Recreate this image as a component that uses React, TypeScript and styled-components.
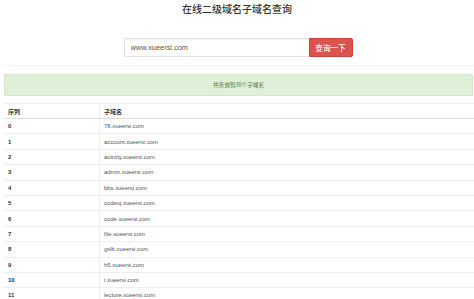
import React from "react";
import styled, { createGlobalStyle } from "styled-components";

const Global = createGlobalStyle`
  html, body { margin: 0; padding: 0; background: #fff; overflow: hidden; }
  body { font-family: "Liberation Sans", "Noto Sans CJK SC", sans-serif; color: #333; }
`;

const Page = styled.div`
  width: 474px;
  display: flex;
  flex-direction: column;
`;

const Title = styled.h1`
  margin: 0;
  padding-top: 3px;
  height: 14px;
  font-family: "Noto Sans CJK SC", sans-serif;
  font-size: 10px;
  line-height: 12px;
  font-weight: 500;
  text-align: center;
  color: #333;
`;

const Form = styled.form`
  display: flex;
  justify-content: center;
  margin: 21px 0 0 2px;
  padding-bottom: 8px;
  border-bottom: 1px solid #f4f4f4;
`;

const Input = styled.input`
  box-sizing: border-box;
  width: 185px;
  height: 19px;
  padding: 0 6px;
  border: 1px solid #e2e2e2;
  border-right: none;
  border-radius: 2px 0 0 2px;
  font-family: "Liberation Sans", sans-serif;
  font-size: 7.4px;
  color: #555;
  outline: none;
  box-shadow: inset 0 1px 1px rgba(0, 0, 0, 0.04);
`;

const Button = styled.button`
  box-sizing: border-box;
  width: 44px;
  height: 19px;
  border: 1px solid #d43f3a;
  border-radius: 0 2px 2px 0;
  background: #d9534f;
  color: #fff;
  font-family: "Noto Sans CJK SC", sans-serif;
  font-size: 7.6px;
  font-weight: 500;
  padding: 0;
`;

const Alert = styled.div`
  box-sizing: border-box;
  margin: 8px 1px 0 4px;
  height: 22px;
  background: #dff0d8;
  border: 1px solid #d6e9c6;
  border-radius: 1px;
  color: #3c763d;
  font-family: "Noto Sans CJK SC", sans-serif;
  font-size: 5.6px;
  display: flex;
  align-items: center;
  justify-content: center;
`;

const Table = styled.table`
  margin: 7px 0 0 4px;
  width: 470px;
  border-collapse: collapse;
  table-layout: fixed;
`;

const Th = styled.th<{ $w?: number }>`
  ${(p) => (p.$w ? `width: ${p.$w}px;` : "")}
  text-align: left;
  font-family: "Liberation Sans", "Noto Sans CJK SC", sans-serif;
  font-size: 6px;
  font-weight: 700;
  color: #333;
  height: 14px;
  padding: 0 0 0 4px;
  border-top: 1px solid #eee;
  border-bottom: 1.5px solid #ddd;
  & + & { border-left: 1px solid #eee; }
`;

const Td = styled.td<{ $bold?: boolean }>`
  font-family: "Liberation Sans", sans-serif;
  font-size: ${(p) => (p.$bold ? "6px" : "5.9px")};
  font-weight: ${(p) => (p.$bold ? 700 : 400)};
  color: ${(p) => (p.$bold ? "#333" : "#555")};
  height: 14.4px;
  padding: 0 0 0 4px;
  border-top: 1px solid #eee;
  & + & { border-left: 1px solid #eee; }
`;

const domains = [
  "78.xueersi.com",
  "account.xueersi.com",
  "activity.xueersi.com",
  "admin.xueersi.com",
  "bbs.xueersi.com",
  "codeoj.xueersi.com",
  "code.xueersi.com",
  "file.xueersi.com",
  "gslb.xueersi.com",
  "h5.xueersi.com",
  "i.xueersi.com",
  "lecture.xueersi.com",
];

export default function App() {
  return (
    <>
      <Global />
      <Page>
        <Title>在线二级域名子域名查询</Title>
        <Form onSubmit={(e) => e.preventDefault()}>
          <Input defaultValue="www.xueersi.com" />
          <Button type="submit">查询一下</Button>
        </Form>
        <Alert>共查询到30个子域名</Alert>
        <Table>
          <thead>
            <tr>
              <Th $w={91}>序列</Th>
              <Th>子域名</Th>
            </tr>
          </thead>
          <tbody>
            {domains.map((d, i) => (
              <tr key={d}>
                <Td $bold>{i}</Td>
                <Td>{d}</Td>
              </tr>
            ))}
          </tbody>
        </Table>
      </Page>
    </>
  );
}
